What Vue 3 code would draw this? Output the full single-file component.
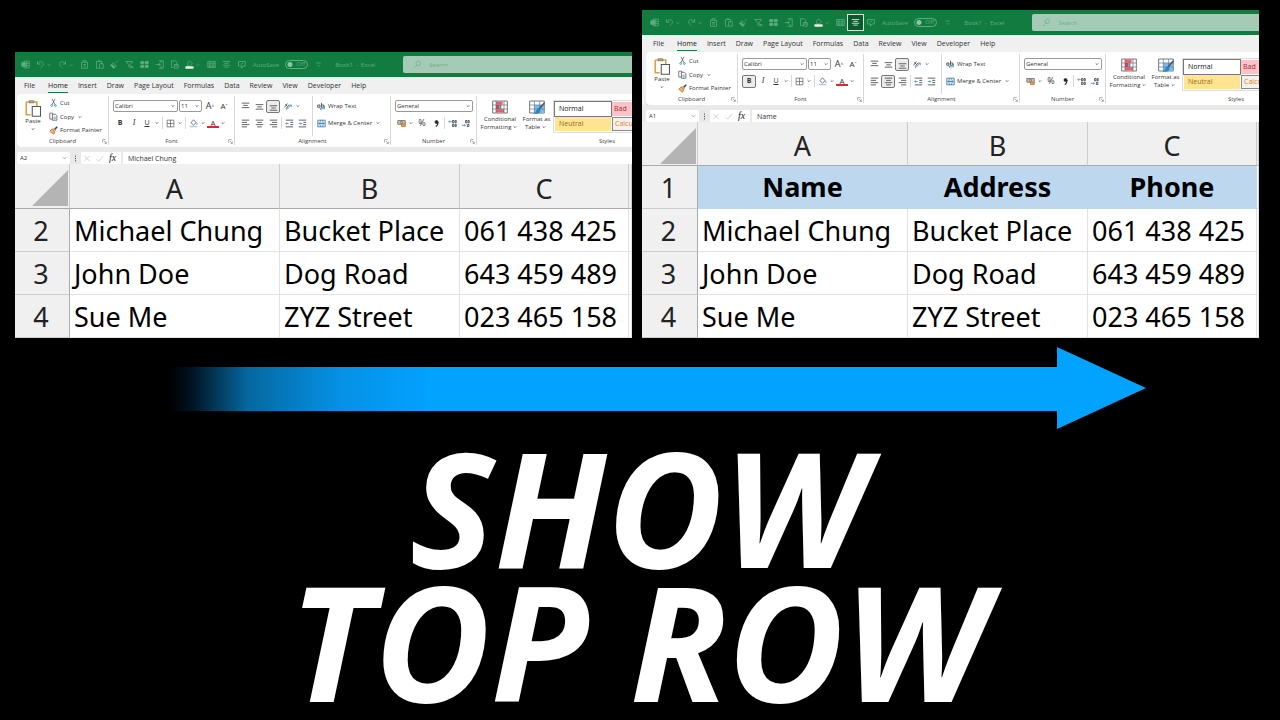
<template>
  <main class="slide">
    <section class="windows">
      <article
        v-for="win in windows"
        :key="win.cell"
        class="excel"
        :class="{ 'with-header': win.header }"
      >
        <header class="titlebar">
          <button
            v-for="item in quickAccess"
            :key="item.icon"
            class="quick"
            :class="{ wide: item.menu, boxed: item.icon === 'lines' && win.header }"
            :aria-label="item.label"
          >
            <Icon :name="item.icon" />
            <Icon v-if="item.menu" name="caret" class="caret" />
          </button>
          <label class="autosave">
            AutoSave
            <input type="checkbox" class="toggle-input" />
            <span class="toggle">Off</span>
          </label>
          <Icon name="more" class="more" />
          <span class="doc-title">Book1&nbsp; -&nbsp; Excel</span>
          <label class="search">
            <Icon name="search" />
            <input type="search" placeholder="Search" aria-label="Search" />
          </label>
        </header>

        <nav class="tabs">
          <a v-for="tab in tabs" :key="tab" href="#" :class="{ active: tab === 'Home' }">{{ tab }}</a>
        </nav>

        <div class="ribbon">
          <div class="group clipboard">
            <div class="group-body">
              <button class="big paste">
                <Icon name="paste" class="large" />
                <span>Paste</span>
                <Icon name="caret" class="caret" />
              </button>
              <div class="stack">
                <button class="command"><Icon name="cut" />Cut</button>
                <button class="command"><Icon name="copy" />Copy <Icon name="caret" class="caret" /></button>
                <button class="command"><Icon name="brush" />Format Painter</button>
              </div>
            </div>
            <div class="group-label">Clipboard<Icon name="launcher" class="launcher" /></div>
          </div>

          <div class="group font">
            <div class="group-body rows">
              <div class="row">
                <span class="drop family">
                  <select aria-label="Font"><option>Calibri</option></select>
                  <Icon name="caret" class="caret" />
                </span>
                <span class="drop size">
                  <select aria-label="Font size"><option>11</option></select>
                  <Icon name="caret" class="caret" />
                </span>
                <button class="tool letter">A<sup>^</sup></button>
                <button class="tool letter small">A<sup>ˇ</sup></button>
              </div>
              <div class="row">
                <button class="tool bold" :class="{ pressed: win.header }">B</button>
                <button class="tool italic">I</button>
                <button class="tool slim underline">U</button>
                <Icon name="caret" class="caret" />
                <i class="sep"></i>
                <button class="tool slim" aria-label="Borders"><Icon name="borders" /></button>
                <Icon name="caret" class="caret" />
                <i class="sep"></i>
                <button class="tool slim" aria-label="Fill colour"><Icon name="fill" /></button>
                <Icon name="caret" class="caret" />
                <button class="tool slim font-color">A</button>
                <Icon name="caret" class="caret" />
              </div>
            </div>
            <div class="group-label">Font<Icon name="launcher" class="launcher" /></div>
          </div>

          <div class="group alignment">
            <div class="group-body">
              <div class="rows align-tools">
                <div class="row">
                  <button class="tool" aria-label="Top align"><Icon name="alignTop" /></button>
                  <button class="tool" aria-label="Middle align"><Icon name="alignMiddle" /></button>
                  <button class="tool pressed" aria-label="Bottom align"><Icon name="alignBottom" /></button>
                  <button class="tool" aria-label="Orientation"><Icon name="orientation" /></button>
                  <Icon name="caret" class="caret" />
                </div>
                <div class="row">
                  <button class="tool" aria-label="Align left"><Icon name="alignLeft" /></button>
                  <button class="tool" :class="{ pressed: win.header }" aria-label="Center"><Icon name="alignCenter" /></button>
                  <button class="tool" aria-label="Align right"><Icon name="alignRight" /></button>
                  <i class="sep"></i>
                  <button class="tool slim" aria-label="Decrease indent"><Icon name="outdent" /></button>
                  <button class="tool" aria-label="Increase indent"><Icon name="indent" /></button>
                </div>
              </div>
              <div class="rows wrap-tools">
                <button class="command"><Icon name="wrap" />Wrap Text</button>
                <button class="command"><Icon name="merge" />Merge &amp; Center <Icon name="caret" class="caret" /></button>
              </div>
            </div>
            <div class="group-label">Alignment<Icon name="launcher" class="launcher" /></div>
          </div>

          <div class="group number">
            <div class="group-body rows">
              <div class="row">
                <span class="drop format">
                  <select aria-label="Number format"><option>General</option></select>
                  <Icon name="caret" class="caret" />
                </span>
              </div>
              <div class="row">
                <button class="tool slim" aria-label="Accounting format"><Icon name="money" /></button>
                <Icon name="caret" class="caret" />
                <button class="tool percent">%</button>
                <button class="tool" aria-label="Comma style"><Icon name="comma" /></button>
                <i class="sep"></i>
                <button class="tool slim" aria-label="Increase decimal"><Icon name="decimalUp" /></button>
                <button class="tool" aria-label="Decrease decimal"><Icon name="decimalDown" /></button>
              </div>
            </div>
            <div class="group-label">Number<Icon name="launcher" class="launcher" /></div>
          </div>

          <div class="group styles">
            <div class="group-body">
              <button class="big conditional">
                <Icon name="conditional" class="large" />
                <span>Conditional</span>
                <span>Formatting <Icon name="caret" class="caret" /></span>
              </button>
              <button class="big as-table">
                <Icon name="tableFormat" class="large" />
                <span>Format as</span>
                <span>Table <Icon name="caret" class="caret" /></span>
              </button>
              <div class="gallery">
                <button class="swatch normal">Normal</button>
                <button class="swatch bad">Bad</button>
                <button class="swatch neutral">Neutral</button>
                <button class="swatch calculation">Calculation</button>
              </div>
            </div>
            <div class="group-label">Styles</div>
          </div>
        </div>

        <div class="formula-bar">
          <label class="name-box">
            <input :value="win.cell" aria-label="Name box" />
            <Icon name="chevron" class="caret" />
          </label>
          <Icon name="dots" class="dots" />
          <div class="formula-tools">
            <Icon name="cancel" />
            <Icon name="check" />
            <span class="fx">fx</span>
          </div>
          <input class="formula" :value="win.formula" aria-label="Formula" />
        </div>

        <table class="sheet">
          <colgroup>
            <col class="col-index" />
            <col class="col-a" />
            <col class="col-b" />
            <col class="col-c" />
            <col />
          </colgroup>
          <thead>
            <tr>
              <th class="corner"><Icon name="corner" /></th>
              <th v-for="letter in ['A', 'B', 'C']" :key="letter">{{ letter }}</th>
              <th></th>
            </tr>
          </thead>
          <tbody>
            <tr v-if="win.header" class="title-row">
              <th>1</th>
              <td v-for="name in win.header" :key="name">{{ name }}</td>
              <td class="blank"></td>
            </tr>
            <tr v-for="(row, i) in people" :key="i">
              <th>{{ i + 2 }}</th>
              <td v-for="value in row" :key="value">{{ value }}</td>
              <td></td>
            </tr>
          </tbody>
        </table>
      </article>
    </section>

    <svg class="arrow" viewBox="0 0 1280 84" aria-hidden="true">
      <defs>
        <linearGradient id="fade" gradientUnits="userSpaceOnUse" x1="170" y1="0" x2="430" y2="0">
          <stop offset="0" stop-color="#000" />
          <stop offset="0.08" stop-color="#001220" />
          <stop offset="0.3" stop-color="#0568a0" />
          <stop offset="0.65" stop-color="#0591e5" />
          <stop offset="1" stop-color="#02a2ff" />
        </linearGradient>
      </defs>
      <path d="M170 20H1057V0L1146 41L1057 82V64H170Z" fill="url(#fade)" />
    </svg>

    <h1 class="headline">
      <span>SHOW</span>
      <span>TOP ROW</span>
    </h1>
  </main>
</template>

<script setup>
import { h } from 'vue'

// every icon is drawn on a 12 x 12 grid
const icons = {
  caret: '<path d="M4 5l2 2 2-2"/>',
  chevron: '<path d="M2 4l4 4 4-4"/>',
  excel: '<path d="M4 1.500h7v9H4zM4 4.500h7M4 7.500h7M7.500 1.500v9"/><path d="M1 3.500h5v5H1z" fill="currentColor"/>',
  undo: '<path d="M2 1.500v4h4M2 5.500c3-5 8-3.500 8 0 0 2-2 3-4 5"/>',
  redo: '<path d="M10 1.500v4H6M10 5.500c-3-5-8-3.500-8 0 0 2 2 3 4 5"/>',
  save: '<path d="M2 3h8v8H2zM4 3V1h4v2M4 6h4M4 8h4"/>',
  pasteValues: '<path d="M2 2h7v3M2 2v9h3M6 5h5v6H6zM4 1h3"/>',
  brushLight: '<path d="M10.500 1L7 4.500M4 3.500l4.500 4.500L5 11 1 7z"/><path d="M3 6l3 3-1 2-4-4z" fill="currentColor"/>',
  filter: '<path d="M1 2h9L7 6v4L5 9V6zM8 8l3 3M11 8l-3 3"/>',
  grid: '<path d="M1 2h4v3H1zM7 2h4v3H7zM1 7h4v3H1zM7 7h4v3H7z" fill="currentColor"/>',
  insertCol: '<path d="M5 1h6v10H5M1 6h6M5 4l2 2-2 2M8 1v3M8 8v3"/>',
  sheet: '<path d="M2 1h5l2 2v3M2 1v9h3M6 6h5v5H6zM6 8h5"/>',
  bucket: '<path d="M3 5l3-4 4 4-3 3H4z"/><path d="M1 9h10v2H1z" fill="#fff" stroke="#fff"/>',
  table: '<path d="M1 2h10v8H1zM1 5h10M1 8h10M4 2v8M8 2v8"/>',
  lines: '<path d="M1 2h10M3 4.500h6M1 7h10M3 9.500h6"/>',
  comment: '<path d="M2 2h9v6H8l-2 3V8H2zM5 6l3-2"/>',
  more: '<path d="M3 4h6M5 7l1.500 1.500L8 7"/>',
  search: '<circle cx="7" cy="4.500" r="3"/><path d="M5 7l-4 4"/>',
  paste: '<path d="M1.500 2h7v3M1.500 2v8.500h3" stroke="#d9a441" stroke-width="1.100"/><path d="M3.500 1.200h3v1.300h-3z" stroke="#777" stroke-width=".6"/><path d="M5.500 5h5.500v6.500H5.500z" fill="#fff" stroke="#555" stroke-width=".7"/>',
  cut: '<path d="M4 1l4 8M8 1L4 9" stroke="#555"/><circle cx="3.500" cy="10" r="1.200" stroke="#2b88c8"/><circle cx="8.500" cy="10" r="1.200" stroke="#2b88c8"/>',
  copy: '<path d="M1 1.500h4v8H1z" stroke="#555"/><path d="M4.500 3h4l2 2v6h-6z" fill="#fff" stroke="#555"/><path d="M6 7h3M6 9h3" stroke="#2b88c8"/>',
  brush: '<path d="M11 1L7.500 4.500" stroke="#444" stroke-width="2"/><path d="M5 3l4 4" stroke="#444"/><path d="M4 4l4 4-2 3-5-4z" fill="#f3b562" stroke="#b8731c"/>',
  launcher: '<path d="M1.500 9V1.500H9M5 5l5 5M10.500 6v4.500H6"/>',
  borders: '<path d="M1.500 1.500h9v9h-9zM6 1.500v9M1.500 6h9" stroke="#666"/>',
  fill: '<path d="M2.500 5L6 1l3.500 4L6 8z" stroke="#555"/><path d="M10 5c1 2 1 2 0 3" stroke="#2b88c8"/><path d="M1 10h10" stroke="#b5c9dc" stroke-width="2"/>',
  alignTop: '<path d="M1 1.500h10M3 4.500h6M1 7.500h10"/>',
  alignMiddle: '<path d="M1 3.500h10M3 6.500h6M1 9.500h10"/>',
  alignBottom: '<path d="M1 5h10M3 8h6M1 11h10"/>',
  orientation: '<path d="M2 7l4-5M4 9l4-5M3 3l3 3"/><path d="M4 11l7-7M11 4v3M11 4H8" stroke="#2b88c8"/>',
  alignLeft: '<path d="M1 1.500h10M1 4.500h7M1 7.500h10M1 10.500h7"/>',
  alignCenter: '<path d="M1 1.500h10M3 4.500h6M1 7.500h10M3 10.500h6"/>',
  alignRight: '<path d="M1 1.500h10M4 4.500h7M1 7.500h10M4 10.500h7"/>',
  outdent: '<path d="M1 1.500h10M7 4.500h4M7 7.500h4M1 10.500h10"/><path d="M5 6H1M2.500 4.500L1 6l1.500 1.500" stroke="#2b88c8"/>',
  indent: '<path d="M1 1.500h10M7 4.500h4M7 7.500h4M1 10.500h10"/><path d="M1 6h4M3.500 4.500L5 6 3.500 7.500" stroke="#2b88c8"/>',
  wrap: '<path d="M1 4h3v3H1zM6 1v6h3V4H6"/><path d="M10 5v4H4M6 7L4 9l2 2" stroke="#2b88c8"/>',
  merge: '<path d="M1 1.500h10v9H1z" fill="#cfe4f5" stroke="#46779e"/><path d="M4.500 1.500v2M7.500 1.500v2M4.500 8.500v2M7.500 8.500v2" stroke="#46779e"/><path d="M2.500 6h7M4 4.500L2.500 6 4 7.500M8 4.500L9.500 6 8 7.500" stroke="#1e6fb0"/>',
  money: '<path d="M1 2h10v5H1z" fill="#c9c2b8" stroke="#6b6258"/><circle cx="6" cy="4.500" r="1.500" stroke="#6b6258"/><path d="M6 7h5v3H6z" fill="#f1a04b" stroke="#c9711a"/>',
  comma: '<circle cx="6" cy="4" r="2" fill="#222" stroke="#222"/><path d="M8 4c0 3-1 5-3 6" stroke="#222" stroke-width="1.500"/>',
  decimalUp: '<path d="M6 2h2v3H6zM9.500 2h1.500v3H9.500zM6 7h2v3H6zM9.500 7h1.500v3H9.500z"/><path d="M1 3.500h4M2.500 2L1 3.500 2.500 5" stroke="#2b88c8"/>',
  decimalDown: '<path d="M6 2h2v3H6zM9.500 2h1.500v3H9.500zM8.500 7h2v3h-2z"/><path d="M1 8.500h5M4.500 7L6 8.500 4.500 10" stroke="#2b88c8"/>',
  conditional: '<path d="M.5 1.500h11v9H.5z" fill="#fff" stroke="#555" stroke-width=".6"/><path d="M3 1.800h5v2.500H3zM3 7.700h6v2.500H3z" fill="#e8606b" stroke="none"/><path d="M3 4.500h2.500v3H3z" fill="#d8434f" stroke="none"/><path d="M5.500 4.500H7v3H5.500z" fill="#4f8fce" stroke="none"/><path d="M.5 4.500h11M.5 7.500h11M3 1.500v9M9 1.500v9" stroke="#666" stroke-width=".5"/>',
  tableFormat: '<path d="M.5 1.500h11v9H.5z" fill="#fff" stroke="#555" stroke-width=".6"/><path d="M4 4.500h7.500v6H4z" fill="#7db9e8" stroke="none"/><path d="M.5 4.500h11M.5 7.500h11M4 1.500v9M8 1.500v9" stroke="#55789a" stroke-width=".5"/><path d="M11.500 3L7 8" stroke="#555" stroke-width="1.200"/><path d="M7.500 7c-2 0-2 3-4 4 3 .5 5-.5 5-3z" fill="#2b88c8" stroke="none"/>',
  dots: '<path d="M6 1v2M6 5v2M6 9v2" stroke-width="1.500"/>',
  cancel: '<path d="M2 2l8 8M10 2l-8 8"/>',
  check: '<path d="M1 7l3 3 7-8"/>',
  corner: '<path d="M12 0v12H0z" fill="#b4b4b4" stroke="none"/>'
}

const Icon = (props) =>
  h('svg', {
    class: 'icon',
    viewBox: '0 0 12 12',
    fill: 'none',
    stroke: 'currentColor',
    'aria-hidden': 'true',
    innerHTML: icons[props.name]
  })
Icon.props = ['name']

const quickAccess = [
  { icon: 'excel', label: 'Excel' },
  { icon: 'undo', label: 'Undo', menu: true },
  { icon: 'redo', label: 'Redo', menu: true },
  { icon: 'save', label: 'Save' },
  { icon: 'pasteValues', label: 'Paste values' },
  { icon: 'brushLight', label: 'Format painter' },
  { icon: 'filter', label: 'Clear filter' },
  { icon: 'grid', label: 'Freeze panes' },
  { icon: 'insertCol', label: 'Insert column' },
  { icon: 'sheet', label: 'Copy sheet' },
  { icon: 'bucket', label: 'Fill colour', menu: true },
  { icon: 'table', label: 'Table' },
  { icon: 'lines', label: 'Center' },
  { icon: 'comment', label: 'Comment' }
]

const tabs = [
  'File', 'Home', 'Insert', 'Draw', 'Page Layout', 'Formulas',
  'Data', 'Review', 'View', 'Developer', 'Help'
]

const people = [
  ['Michael Chung', 'Bucket Place', '061 438 425'],
  ['John Doe', 'Dog Road', '643 459 489'],
  ['Sue Me', 'ZYZ Street', '023 465 158']
]

const windows = [
  { cell: 'A2', formula: 'Michael Chung', header: null },
  { cell: 'A1', formula: 'Name', header: ['Name', 'Address', 'Phone'] }
]
</script>

<style>
body {
  background: #000;
}
</style>

<style scoped>
.slide {
  min-height: 100vh;
  background: #000;
  overflow: hidden;
  font-family: 'Open Sans', 'Noto Sans', sans-serif;
}

.windows {
  display: flex;
  align-items: flex-end;
  gap: 10px;
  padding: 10px 21px 0 15px;
}

.excel {
  flex: 1;
  min-width: 0;
  overflow: hidden;
  background: #f0f0f0;
  color: #333;
  font-size: 6px;
  line-height: 8px;
}

button,
input,
select {
  font: inherit;
  color: inherit;
  border: 0;
  padding: 0;
  margin: 0;
  background: none;
  min-width: 0;
}

button {
  display: flex;
  align-items: center;
  white-space: nowrap;
}

.icon {
  width: 9px;
  height: 9px;
  flex: none;
}

.caret {
  width: 8px;
  height: 8px;
}

/* title bar */
.titlebar {
  display: flex;
  align-items: center;
  height: 25px;
  padding-left: 3px;
  background: #127c40;
  color: #5fae82;
}

.with-header .titlebar,
.with-header .tabs {
  padding-left: 5px;
}

.quick {
  width: 15px;
  height: 15px;
  flex: none;
  justify-content: center;
}

.quick.wide {
  width: 22px;
}

.quick.boxed {
  outline: 1px solid #cfe6d8;
  background: #0b5a2d;
  color: #fff;
}

.autosave {
  display: flex;
  align-items: center;
  gap: 6px;
  margin-left: 4px;
}

.toggle-input {
  appearance: none;
  width: 0;
  margin: 0 -6px 0 0;
}

.toggle {
  width: 23px;
  height: 9px;
  box-sizing: border-box;
  padding-left: 10px;
  border: 1px solid #5fae82;
  border-radius: 5px;
  line-height: 7px;
  background: radial-gradient(circle at 4px 50%, #8cc7a5 2px, transparent 3px);
}

.more {
  margin-left: 6px;
}

.doc-title {
  margin-left: 12px;
  width: 68px;
  flex: none;
}

.search {
  display: flex;
  align-items: center;
  flex: 1;
  gap: 7px;
  height: 17px;
  padding-left: 10px;
  background: #a4cbb5;
  border-radius: 2px 0 0 2px;
  color: #6fae8a;
}

.search input {
  width: 100%;
  appearance: none;
}

.search input::placeholder {
  color: #6fae8a;
}

/* tabs */
.tabs {
  display: flex;
  gap: 10px;
  height: 15px;
  padding: 2px 0 0 3px;
  font-size: 7px;
  line-height: 14px;
}

.tabs a {
  color: #333;
  text-decoration: none;
  height: 13px;
  white-space: nowrap;
}

.tabs a:first-child {
  margin: 0 3px 0 6px;
}

.tabs a.active {
  color: #111;
  border-bottom: 1px solid #217346;
}

/* ribbon */
.ribbon {
  display: flex;
  height: 53px;
  margin-left: 2px;
  background: #fff;
  border-radius: 4px 0 0 4px;
  box-shadow: 0 1px 1px #c8c8c8;
}

.with-header .ribbon {
  margin-left: 4px;
}

.group {
  display: flex;
  flex-direction: column;
  flex: none;
  box-sizing: border-box;
  margin: 2px 0;
  border-right: 1px solid #d8d8d8;
}

.clipboard {
  width: 92px;
}

.font {
  width: 126px;
}

.alignment {
  width: 156px;
}

.number {
  width: 86px;
}

.styles {
  width: 260px;
  border-right: 0;
}

.group-body {
  display: flex;
  height: 40px;
}

.rows {
  display: flex;
  flex-direction: column;
  gap: 3px;
  padding: 3px 0 0 4px;
}

.row {
  display: flex;
  align-items: center;
  height: 14px;
}

.group-label {
  position: relative;
  height: 9px;
  line-height: 11px;
  text-align: center;
  color: #444;
}

.launcher {
  position: absolute;
  right: 1px;
  top: 3px;
  width: 5px;
  height: 5px;
}

.big {
  flex-direction: column;
  padding-top: 3px;
}

.big .large {
  width: 16px;
  height: 16px;
}

.big span {
  display: flex;
  align-items: center;
}

.paste {
  width: 32px;
}

.paste .large {
  width: 18px;
  height: 18px;
}

.stack {
  display: flex;
  flex-direction: column;
  gap: 2px;
  padding-top: 1px;
}

.command {
  height: 12px;
  gap: 2px;
}

.wrap-tools {
  border-left: 1px solid #d8d8d8;
  padding-left: 4px;
  margin-left: 3px;
}

.wrap-tools .command {
  height: 14px;
}

.align-tools {
  padding-left: 3px;
}

.tool {
  width: 14px;
  height: 13px;
  box-sizing: border-box;
  justify-content: center;
}

.tool.slim {
  width: 12px;
}

.tool.pressed {
  border: 1px solid #777;
  border-radius: 2px;
  background: #ececec;
}

.sep {
  width: 1px;
  height: 12px;
  margin: 0 1px;
  background: #d8d8d8;
}

.drop {
  display: flex;
  align-items: center;
  height: 12px;
  box-sizing: border-box;
  border: 1px solid #999;
  border-radius: 2px;
}

.drop select {
  flex: 1;
  appearance: none;
  padding-left: 1px;
  height: 10px;
}

.family {
  width: 65px;
}

.size {
  width: 23px;
  margin: 0 1px;
}

.format {
  width: 78px;
}

.letter {
  font-size: 9px;
}

.letter.small {
  font-size: 8px;
}

.letter sup {
  font-size: 5px;
}

.bold {
  font-size: 7px;
  font-weight: 700;
}

.italic {
  font-size: 8px;
  font-style: italic;
  font-family: 'Liberation Serif', serif;
}

.underline {
  font-size: 7px;
  text-decoration: underline;
}

.font-color {
  font-size: 8px;
  line-height: 7px;
  height: 10px;
  border-bottom: 2px solid #e0262e;
}

.percent {
  font-size: 9px;
}

.conditional {
  width: 40px;
  margin-left: 3px;
}

.as-table {
  width: 33px;
}

.gallery {
  display: grid;
  grid-template-columns: 56px 80px;
  grid-template-rows: 14px 14px;
  gap: 1px;
  padding: 1px;
  margin-top: 4px;
  height: 29px;
  border: 1px solid #ddd;
  font-size: 7px;
}

.swatch {
  padding-left: 4px;
}

.normal {
  outline: 1px solid #777;
  background: #fff;
  color: #111;
}

.bad {
  background: #ffc2c8;
  color: #a52a35;
  padding-left: 2px;
}

.neutral {
  background: #ffe491;
  color: #9c6a10;
}

.calculation {
  border: 1px solid #888;
  background: #f5f2ee;
  color: #e07b1a;
  padding-left: 2px;
}

/* formula bar */
.formula-bar {
  display: flex;
  align-items: center;
  height: 12px;
  padding: 5px 0 0 2px;
  background: #e9e9e9;
}

.with-header .formula-bar {
  padding-left: 4px;
}

.name-box {
  display: flex;
  align-items: center;
  width: 53px;
  height: 12px;
  background: #fff;
  border-radius: 2px;
}

.name-box input {
  flex: 1;
  width: 30px;
  padding-left: 3px;
}

.name-box .caret {
  width: 5px;
  margin-right: 3px;
}

.dots {
  width: 7px;
  margin: 0 2px;
}

.formula-tools {
  display: flex;
  align-items: center;
  width: 38px;
  height: 12px;
  gap: 5px;
  padding-left: 2px;
  background: #fff;
  color: #bbb;
}

.formula-tools .icon {
  width: 8px;
}

.fx {
  font: italic 10px/12px 'Liberation Serif', serif;
  color: #222;
}

.formula {
  flex: 1;
  height: 12px;
  margin-left: 2px;
  padding-left: 5px;
  background: #fff;
  font-size: 7px;
}

/* sheet */
.sheet {
  width: 100%;
  table-layout: fixed;
  border-collapse: separate;
  border-spacing: 0;
  background: #fff;
  font-family: 'Noto Sans', 'Open Sans', sans-serif;
  font-size: 27px;
  line-height: 36px;
  color: #000;
}

.col-index {
  width: 55px;
}

.with-header .col-index {
  width: 56px;
}

.col-a {
  width: 210px;
}

.col-b {
  width: 180px;
}

.col-c {
  width: 169px;
}

.sheet th,
.sheet td {
  height: 43px;
  box-sizing: border-box;
  padding: 1px 0 0 4px;
  border-right: 1px solid #e2e2e2;
  border-bottom: 1px solid #e2e2e2;
  text-align: left;
  white-space: nowrap;
}

.sheet th {
  padding: 1px 0 0;
  background: #f0f0f0;
  border-color: #ccc;
  font-weight: 400;
  text-align: center;
  color: #222;
}

.sheet thead th {
  height: 45px;
  padding-top: 5px;
  border-bottom-color: #aaa;
}

.with-header .sheet thead th {
  height: 44px;
}

.sheet tbody th {
  border-right-color: #aaa;
  padding-right: 2px;
}

.sheet thead .corner {
  text-align: right;
  line-height: 0;
  padding: 4px 1px 0 0;
}

.corner .icon {
  width: 36px;
  height: 36px;
}

.sheet .title-row td {
  background: #bdd7ee;
  border-color: #bdd7ee;
  font-weight: 700;
  text-align: center;
  padding: 0;
}

.sheet .title-row .blank {
  background: #fff;
}

/* lower half */
.arrow {
  display: block;
  width: 100%;
  margin-top: 9px;
}

.headline {
  display: flex;
  flex-direction: column;
  align-items: center;
  margin: 8px 4px 0 0;
  color: #fff;
  font: italic 700 160px/134px 'Open Sans', 'Noto Sans', sans-serif;
  white-space: nowrap;
}
</style>
